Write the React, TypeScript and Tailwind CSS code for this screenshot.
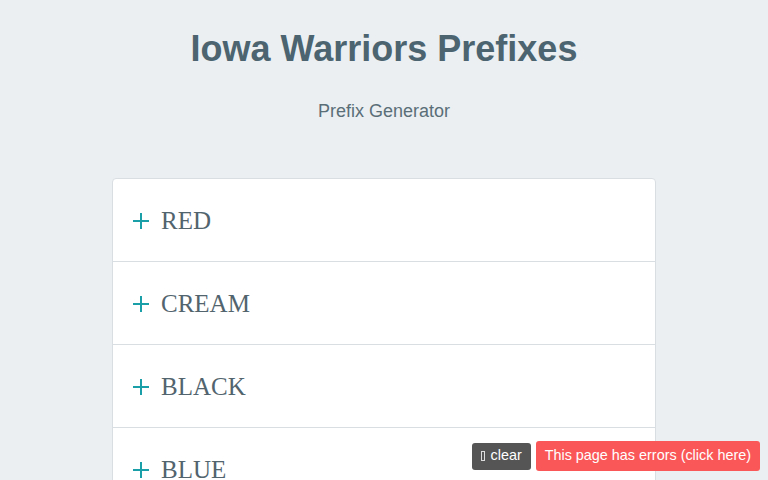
import React from "react";

const items = ["RED", "CREAM", "BLACK", "BLUE", "GOLD"];

function Plus() {
  return (
    <svg width="16" height="16" viewBox="0 0 16 16" className="shrink-0">
      <path d="M8 0v16M0 8h16" stroke="#1a9fa8" strokeWidth="2" />
    </svg>
  );
}

export default function App() {
  return (
    <div className="min-h-screen bg-[#ebeff2] flex flex-col items-center" style={{ fontFamily: '"Liberation Sans", Arial, sans-serif' }}>
      <h1 className="mt-[28px] text-[36px] leading-[42px] font-bold text-[#4b6470]">Iowa Warriors Prefixes</h1>
      <p className="mt-[30px] text-[18px] leading-[22px] text-[#5a6e78]">Prefix Generator</p>
      <div className="mt-[56px] w-[544px] bg-white border border-[#d9dee2] rounded-[4px]">
        {items.map((name, i) => (
          <div
            key={name}
            className={`flex items-center gap-[12px] pl-[20px] pt-[2px] ${i > 0 ? "h-[83px] border-t border-[#d9dee2]" : "h-[82px]"}`}
          >
            <Plus />
            <span className="text-[25px] text-[#52646e]" style={{ fontFamily: '"Liberation Serif", "Times New Roman", serif' }}>
              {name}
            </span>
          </div>
        ))}
      </div>
      <div className="fixed right-[8px] top-[441px] h-[30px] flex items-center gap-[5px]">
        <button className="h-[27px] w-[59px] justify-center rounded-[3px] bg-[#555555] text-white text-[14.4px] flex items-center gap-[6px]">
          <span className="inline-block w-[4px] h-[10px] border border-white/80"></span>
          clear
        </button>
        <button className="h-[30px] px-[9px] rounded-[3px] bg-[#fa5858] text-white text-[14.4px] flex items-center">
          This page has errors (click here)
        </button>
      </div>
    </div>
  );
}
